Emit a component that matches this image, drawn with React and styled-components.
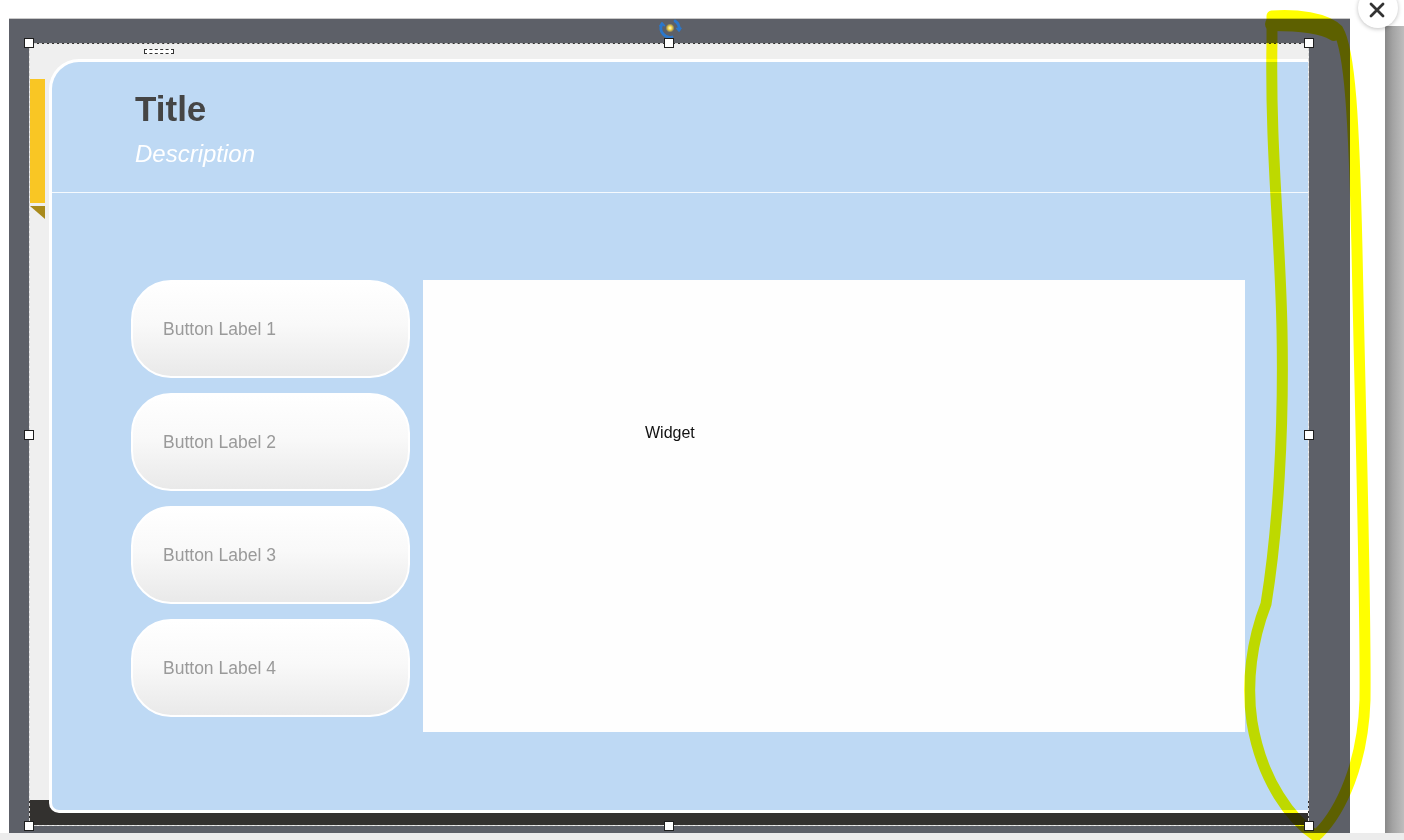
import React from 'react'
import styled, { createGlobalStyle } from 'styled-components'

const GlobalStyle = createGlobalStyle`
  html, body {
    margin: 0;
    padding: 0;
    background: #fff;
    overflow: hidden;
  }
  body {
    font-family: "Liberation Sans", Arial, sans-serif;
  }
`

const Page = styled.div`
  position: relative;
  width: 1404px;
  height: 840px;
  background: #fff;
  display: grid;
  grid-template-columns: 1385px 19px;
  grid-template-rows: 833px 7px;
  overflow: hidden;
`

const Stage = styled.div`
  padding: 18px 35px 0 9px;
  box-sizing: border-box;
`

const ShadowStrip = styled.div`
  margin-top: 26px;
  background: linear-gradient(to right, #888, #a3a3a3 40%, #bdbdbd);
`

const BottomStrip = styled.div`
  grid-column: 1 / -1;
  background: #ececec;
`

const Frame = styled.div`
  position: relative;
  height: 100%;
  box-sizing: border-box;
  padding: 24px 41px 7px 20px;
  background: #5d6068;
  border-top: 1px solid #c9c9c9;
`

const CanvasWrap = styled.div`
  position: relative;
  height: 100%;
`

const Canvas = styled.div`
  position: relative;
  height: 100%;
  box-sizing: border-box;
  display: flex;
  padding: 15px 0 12px 0;
  border: 1px dashed #d8d8d8;
  background: linear-gradient(
    to bottom,
    #efefef calc(100% - 25px),
    #33312f calc(100% - 25px)
  );
  overflow: hidden;
`

const Handle = styled.span`
  position: absolute;
  left: ${p => p.$x};
  top: ${p => p.$y};
  width: 8px;
  height: 8px;
  background: #fff;
  border: 1.5px solid #1d1d1d;
  transform: translate(-50%, -50%);
  z-index: 2;
`

const Marker = styled.div`
  position: absolute;
  left: 114px;
  top: 5px;
  width: 28px;
  height: 3px;
  background: #fff;
  border: 1px dashed #333;
`

const LeftRail = styled.div`
  flex: none;
  width: 19px;
  display: flex;
  flex-direction: column;
  padding-top: 20px;
`

const YellowTab = styled.div`
  width: 15px;
  height: 124px;
  background: #f9c624;
`

const TabFold = styled.div`
  margin-top: 3px;
  width: 15px;
  height: 13px;
  background: #a98a1c;
  clip-path: polygon(0 0, 100% 0, 100% 100%);
`

const Panel = styled.div`
  flex: 1;
  margin-right: -10px;
  display: flex;
  flex-direction: column;
  background: #bed9f4;
  border: 3px solid #fff;
  border-right: none;
  border-top-left-radius: 30px;
  border-bottom-left-radius: 10px;
`

const Header = styled.div`
  height: 131px;
  box-sizing: border-box;
  padding: 27px 0 0 83px;
  border-bottom: 1px solid rgba(255, 255, 255, 0.85);
`

const Title = styled.h1`
  margin: 0;
  font-size: 35px;
  line-height: 40px;
  font-weight: 700;
  color: #454545;
`

const Description = styled.p`
  margin: 11px 0 0;
  font-size: 24px;
  line-height: 28px;
  font-style: italic;
  color: #fff;
`

const Body = styled.div`
  display: flex;
  align-items: flex-start;
  gap: 13px;
  padding: 87px 0 0 79px;
`

const ButtonColumn = styled.div`
  display: flex;
  flex-direction: column;
  gap: 15px;
  width: 279px;
`

const NavButton = styled.button`
  height: 98px;
  box-sizing: border-box;
  display: flex;
  align-items: center;
  padding: 0 0 0 30px;
  border: 2px solid #fff;
  border-radius: 40px;
  background: linear-gradient(to bottom, #ffffff, #f9f9f9 45%, #e9e9e9);
  font-family: "Liberation Sans", Arial, sans-serif;
  font-size: 17.5px;
  color: #9a9a9a;
  text-align: left;
  cursor: pointer;
`

const Widget = styled.div`
  width: 822px;
  height: 452px;
  box-sizing: border-box;
  padding: 144px 0 0 222px;
  background: #fefefe;
  font-size: 16px;
  line-height: 18px;
  color: #111;
`

const RotateKnob = styled.svg`
  position: absolute;
  left: 648px;
  top: -4px;
  width: 26px;
  height: 26px;
`

const CloseButton = styled.button`
  position: absolute;
  left: 1358px;
  top: -12px;
  width: 40px;
  height: 40px;
  padding: 14px 3px 0 0;
  display: flex;
  justify-content: center;
  align-items: flex-start;
  border: none;
  border-radius: 50%;
  background: #fff;
  box-shadow: 0 1px 4px rgba(0, 0, 0, 0.25);
  cursor: pointer;
`

const Scribble = styled.svg`
  position: absolute;
  left: 0;
  top: 0;
  width: 1404px;
  height: 840px;
  pointer-events: none;
  mix-blend-mode: multiply;
`

const handles = [
  ['0%', '0%'], ['50%', '0%'], ['100%', '0%'],
  ['0%', '50%'], ['100%', '50%'],
  ['0%', '100%'], ['50%', '100%'], ['100%', '100%'],
]

const labels = ['Button Label 1', 'Button Label 2', 'Button Label 3', 'Button Label 4']

const App = () => {
  return (
    <Page>
      <GlobalStyle />
      <Stage>
        <Frame>
          <RotateKnob viewBox="0 0 26 26">
            <defs>
              <radialGradient id="glow">
                <stop offset="0%" stopColor="#fffbe0" />
                <stop offset="45%" stopColor="#f3d443" />
                <stop offset="100%" stopColor="#f3d443" stopOpacity="0" />
              </radialGradient>
            </defs>
            <path d="M5 9 A9 9 0 0 0 15 22" fill="none" stroke="#2b78cc" strokeWidth="2.8" strokeLinecap="round" />
            <path d="M2.6 11.6 L5 8.2 L7.8 11.2" fill="none" stroke="#2b78cc" strokeWidth="1.8" />
            <path d="M18 6 A9 9 0 0 1 22 15" fill="none" stroke="#2b78cc" strokeWidth="2.8" strokeLinecap="round" />
            <path d="M24.2 12.6 L22 15.6 L19.4 12.8" fill="none" stroke="#2b78cc" strokeWidth="1.8" />
            <circle cx="13" cy="13" r="4.5" fill="url(#glow)" />
          </RotateKnob>
          <CanvasWrap>
            <Canvas>
              <Marker />
              <LeftRail>
                <YellowTab />
                <TabFold />
              </LeftRail>
              <Panel>
                <Header>
                  <Title>Title</Title>
                  <Description>Description</Description>
                </Header>
                <Body>
                  <ButtonColumn>
                    {labels.map(label => (
                      <NavButton key={label}>{label}</NavButton>
                    ))}
                  </ButtonColumn>
                  <Widget>Widget</Widget>
                </Body>
              </Panel>
            </Canvas>
            {handles.map(([x, y]) => (
              <Handle key={x + y} $x={x} $y={y} />
            ))}
          </CanvasWrap>
        </Frame>
      </Stage>
      <ShadowStrip />
      <BottomStrip />
      <CloseButton aria-label="Close">
        <svg width="16" height="16" viewBox="0 0 16 16">
          <path d="M2 2 L14 14 M14 2 L2 14" stroke="#333" strokeWidth="2.8" strokeLinecap="round" />
        </svg>
      </CloseButton>
      <Scribble viewBox="0 0 1404 840">
        <path
          d="M1316 836 C1292 820 1262 782 1252 722 C1246 682 1252 640 1266 604
             C1278 530 1284 430 1282 330 C1280 230 1270 150 1272 40 L1272 16
             C1296 14 1326 18 1338 30 C1350 50 1354 120 1357 250
             C1360 400 1366 600 1365 700 C1363 762 1342 810 1318 834"
          fill="none"
          stroke="#ffff00"
          strokeWidth="11"
          strokeLinecap="round"
          strokeLinejoin="round"
        />
        <path
          d="M1272 24 C1298 24 1322 26 1334 34"
          fill="none"
          stroke="#ffff00"
          strokeWidth="14"
          strokeLinecap="round"
        />
      </Scribble>
    </Page>
  )
}

export default App
